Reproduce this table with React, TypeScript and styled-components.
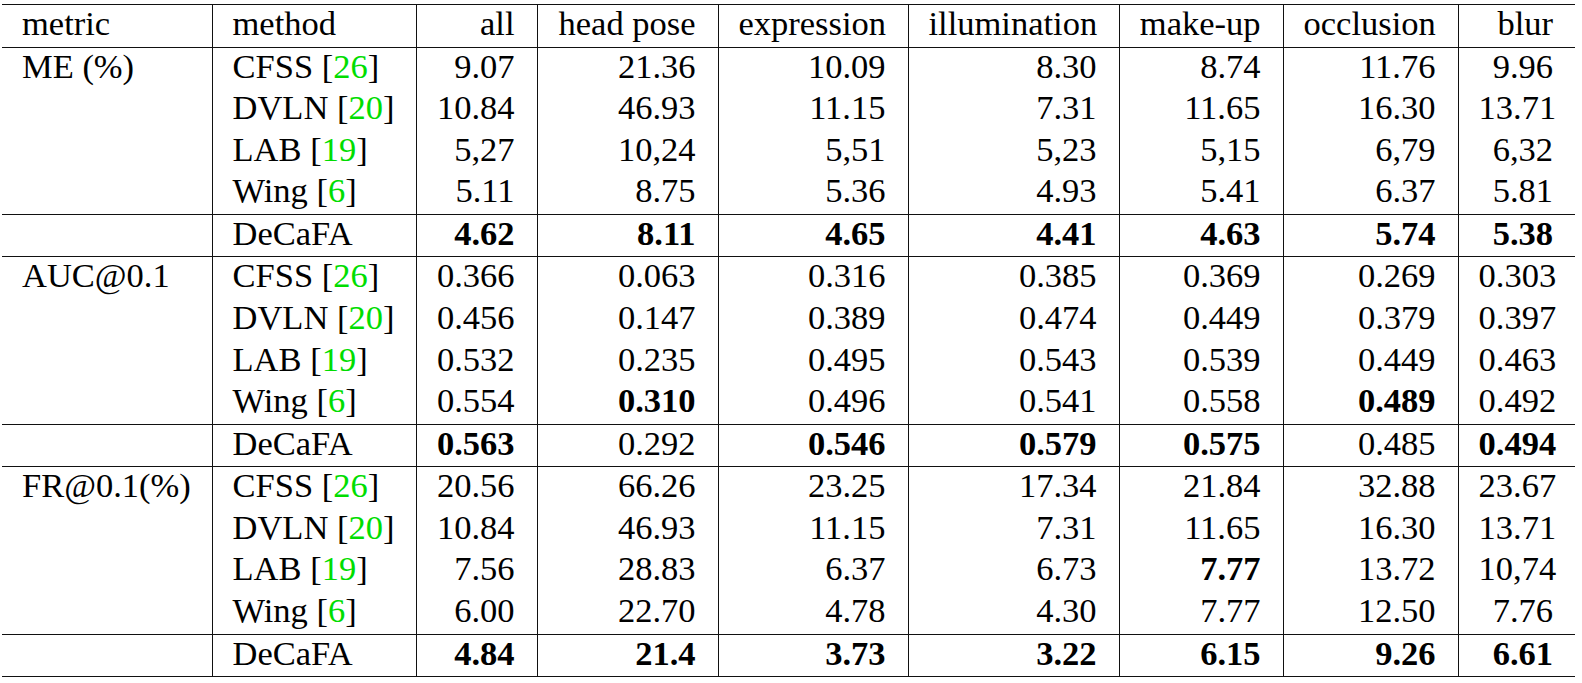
import React from "react";
import styled, { createGlobalStyle } from "styled-components";

const Global = createGlobalStyle`
  html, body { margin: 0; padding: 0; background: #fff; }
  body { font-family: "Liberation Serif", "Times New Roman", serif; color: #000; }
`;

const Page = styled.div`
  padding: 4px 0 0 2px;
`;

const Table = styled.table`
  border-collapse: collapse;
  table-layout: fixed;
  width: 1573px;
  font-family: "Liberation Serif", "Times New Roman", serif;
  font-size: 34.5px;
  border-top: 1px solid #111;
  border-bottom: 1px solid #111;
`;

const Row = styled.tr<{ $rule?: boolean }>`
  height: 41.7px;
  border-bottom: ${(p) => (p.$rule ? "1px solid #111" : "none")};
`;

const Cell = styled.td<{ $left?: boolean; $divider?: boolean; $bold?: boolean }>`
  padding: 0 22px 5px 20px;
  line-height: 36.5px;
  white-space: nowrap;
  text-align: ${(p) => (p.$left ? "left" : "right")};
  font-weight: ${(p) => (p.$bold ? 700 : 400)};
  border-left: ${(p) => (p.$divider ? "1px solid #111" : "none")};
  vertical-align: top;
`;

const Ref = styled.span`
  color: #00dd00;
`;

const widths = [210, 204, 121, 181, 190, 211, 164, 175, 117];

const headers = ["all", "head pose", "expression", "illumination", "make-up", "occlusion", "blur"];

type Method = { name: string; ref?: string; values: string[] };
type Group = { metric: string; rows: Method[]; best: string[] };

const groups: Group[] = [
  {
    metric: "ME (%)",
    rows: [
      { name: "CFSS", ref: "26", values: ["9.07", "21.36", "10.09", "8.30", "8.74", "11.76", "9.96"] },
      { name: "DVLN", ref: "20", values: ["10.84", "46.93", "11.15", "7.31", "11.65", "16.30", "13.71"] },
      { name: "LAB", ref: "19", values: ["5,27", "10,24", "5,51", "5,23", "5,15", "6,79", "6,32"] },
      { name: "Wing", ref: "6", values: ["5.11", "8.75", "5.36", "4.93", "5.41", "6.37", "5.81"] },
    ],
    best: ["*4.62", "*8.11", "*4.65", "*4.41", "*4.63", "*5.74", "*5.38"],
  },
  {
    metric: "AUC@0.1",
    rows: [
      { name: "CFSS", ref: "26", values: ["0.366", "0.063", "0.316", "0.385", "0.369", "0.269", "0.303"] },
      { name: "DVLN", ref: "20", values: ["0.456", "0.147", "0.389", "0.474", "0.449", "0.379", "0.397"] },
      { name: "LAB", ref: "19", values: ["0.532", "0.235", "0.495", "0.543", "0.539", "0.449", "0.463"] },
      { name: "Wing", ref: "6", values: ["0.554", "*0.310", "0.496", "0.541", "0.558", "*0.489", "0.492"] },
    ],
    best: ["*0.563", "0.292", "*0.546", "*0.579", "*0.575", "0.485", "*0.494"],
  },
  {
    metric: "FR@0.1(%)",
    rows: [
      { name: "CFSS", ref: "26", values: ["20.56", "66.26", "23.25", "17.34", "21.84", "32.88", "23.67"] },
      { name: "DVLN", ref: "20", values: ["10.84", "46.93", "11.15", "7.31", "11.65", "16.30", "13.71"] },
      { name: "LAB", ref: "19", values: ["7.56", "28.83", "6.37", "6.73", "*7.77", "13.72", "10,74"] },
      { name: "Wing", ref: "6", values: ["6.00", "22.70", "4.78", "4.30", "7.77", "12.50", "7.76"] },
    ],
    best: ["*4.84", "*21.4", "*3.73", "*3.22", "*6.15", "*9.26", "*6.61"],
  },
];

const ValueCells: React.FC<{ values: string[] }> = ({ values }) => (
  <>
    {values.map((v, i) => {
      const bold = v.startsWith("*");
      return (
        <Cell key={i} $divider $bold={bold}>
          {bold ? v.slice(1) : v}
        </Cell>
      );
    })}
  </>
);

export default function App() {
  return (
    <>
      <Global />
      <Page>
        <Table>
          <colgroup>
            {widths.map((w, i) => (
              <col key={i} style={{ width: w }} />
            ))}
          </colgroup>
          <tbody>
            <Row $rule>
              <Cell $left>metric</Cell>
              <Cell $left $divider>method</Cell>
              {headers.map((h) => (
                <Cell key={h} $divider>{h}</Cell>
              ))}
            </Row>
            {groups.map((g) => (
              <React.Fragment key={g.metric}>
                {g.rows.map((r, i) => (
                  <Row key={r.name} $rule={i === g.rows.length - 1}>
                    <Cell $left>{i === 0 ? g.metric : ""}</Cell>
                    <Cell $left $divider>
                      {r.name} [<Ref>{r.ref}</Ref>]
                    </Cell>
                    <ValueCells values={r.values} />
                  </Row>
                ))}
                <Row $rule>
                  <Cell $left></Cell>
                  <Cell $left $divider>DeCaFA</Cell>
                  <ValueCells values={g.best} />
                </Row>
              </React.Fragment>
            ))}
          </tbody>
        </Table>
      </Page>
    </>
  );
}
